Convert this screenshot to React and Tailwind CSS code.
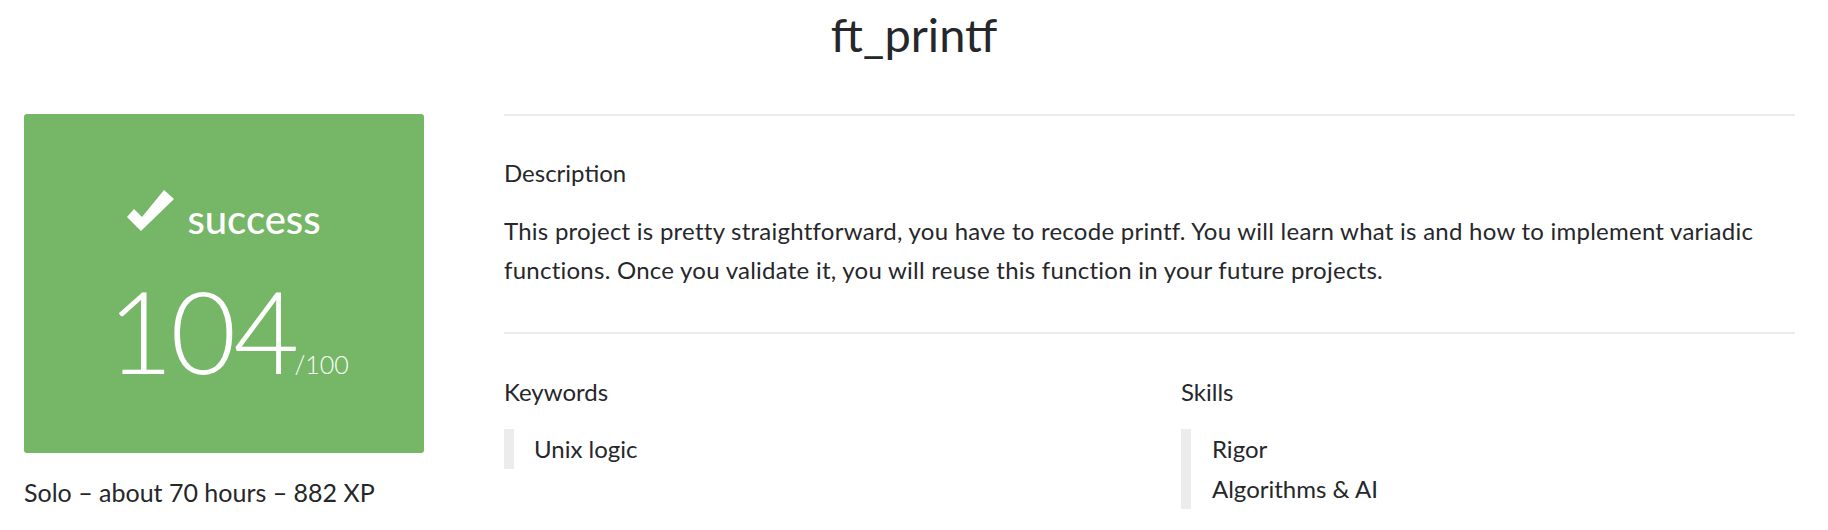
import React from "react";

function Check() {
  return (
    <svg width="47" height="41" viewBox="0 0 47 41" className="mb-[12px] mr-[13px]">
      <polygon points="7,19 15,27 37,0 47,9 14,41 0,27" fill="#ffffff" />
    </svg>
  );
}

export default function App() {
  return (
    <div className="w-[1828px] h-[530px] bg-white text-[#26272b] font-[Lato,sans-serif] overflow-hidden">
      <div className="pt-[4px] h-[114px]">
        <h1 className="text-center text-[47px] leading-[60px] font-normal">ft_printf</h1>
      </div>
      <div className="flex pl-[24px] gap-[80px]">
        <div className="w-[400px] shrink-0 flex flex-col">
          <div className="h-[339px] rounded-[3px] bg-[#75b667] text-white flex flex-col items-center pt-[76px]">
            <div className="flex items-end">
              <Check />
              <span className="text-[40px] leading-[48px] font-medium">success</span>
            </div>
            <div className="flex items-baseline mt-[30px] pl-[8px]">
              <span className="text-[114px] leading-[114px] font-light tracking-[-3px]">104</span>
              <span className="text-[25px] font-light -ml-[2px]">/100</span>
            </div>
          </div>
          <div className="mt-[24px] text-[25px] leading-[30px]">Solo – about 70 hours – 882 XP</div>
        </div>
        <div className="w-[1291px] shrink-0 flex flex-col">
          <div className="h-[2px] bg-[#ececec]" />
          <div className="mt-[42px] text-[24px] leading-[30px]">Description</div>
          <p className="mt-[23px] text-[24px] leading-[39px] tracking-[0.25px]">
            This project is pretty straightforward, you have to recode printf. You will learn what is and how to implement variadic functions. Once you validate it, you will reuse this function in your future projects.
          </p>
          <div className="mt-[43px] h-[2px] bg-[#ececec]" />
          <div className="grid grid-cols-[677px_1fr] mt-[43px]">
            <div>
              <div className="text-[24px] leading-[30px]">Keywords</div>
              <div className="mt-[22px] border-l-[10px] border-[#ececec] pl-[20px] text-[24px] leading-[40px]">
                <div>Unix logic</div>
              </div>
            </div>
            <div>
              <div className="text-[24px] leading-[30px]">Skills</div>
              <div className="mt-[22px] border-l-[10px] border-[#ececec] pl-[21px] text-[24px] leading-[40px]">
                <div>Rigor</div>
                <div>Algorithms &amp; AI</div>
              </div>
            </div>
          </div>
        </div>
      </div>
    </div>
  );
}
